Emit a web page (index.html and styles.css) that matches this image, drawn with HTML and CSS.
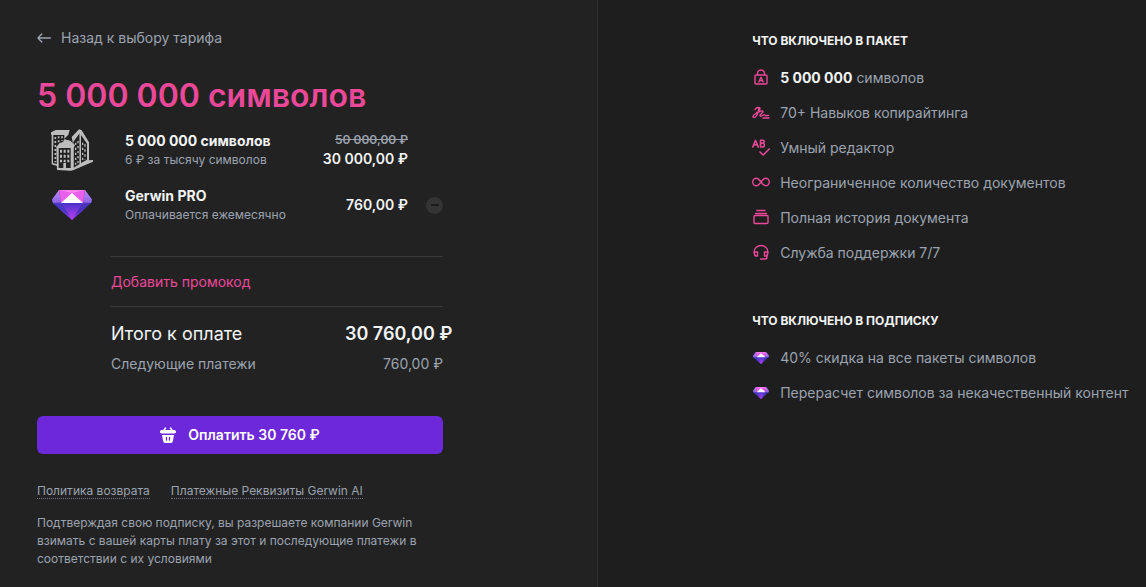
FILE: index.html
```html
<!doctype html>
<html lang="ru">
<head>
  <meta charset="utf-8">
  <meta name="viewport" content="width=device-width,initial-scale=1">
  <title>Оплата тарифа</title>
  <link rel="stylesheet" href="styles.css">
</head>
<body>

<!-- общий алмаз для подписки -->
<svg class="defs" aria-hidden="true">
  <linearGradient id="gemLow" x1="0" y1="0" x2="0" y2="1">
    <stop offset="0" stop-color="#3d35c8"/><stop offset="1" stop-color="#c93df5"/>
  </linearGradient>
  <linearGradient id="gemSide" x1="0" y1="0" x2="0" y2="1">
    <stop offset="0" stop-color="#bd8cfa"/><stop offset="1" stop-color="#8b62e6"/>
  </linearGradient>
  <symbol id="gem" viewBox="0 0 40 30">
    <path fill="#4b32bd" d="M0 11 2 14l18 16 18-16 2-3z"/>
    <path fill="url(#gemLow)" d="M9 12h22L20 30z"/>
    <path fill="#4a36c4" d="M0 10l9 2 11 18L2 14z"/>
    <path fill="url(#gemLow)" d="M5 17 20 30 35 17 20 27z" opacity=".6"/>
    <path fill="url(#gemSide)" d="M7 0 0 9.500 1 13l8-.500L7 0zM33 0l7 9.500-1 3.500-8-.500L33 0z"/>
    <path fill="#f56af2" d="M7 0h26l-2 12.500H9z"/>
    <path fill="#ff85ee" d="M7 0h26L20 3z"/>
    <path fill="#d94fe8" d="M7 0 9 12.500 20 3zM33 0l-2 12.500L20 3z" opacity=".4"/>
    <path fill="#fff" d="M20 3 9 13h22z"/>
  </symbol>
</svg>

<div class="page">
  <main class="order">
    <div class="inner">
      <a class="back" href="#">
        <svg width="14" height="10" viewBox="0 0 14 10" fill="none" stroke="currentColor" stroke-width="1.400" stroke-linecap="round" stroke-linejoin="round"><path d="M13.300 5H1M4.800 1 1 5l3.800 4"/></svg>
        Назад к выбору тарифа
      </a>

      <h1>5 000 000 символов</h1>

      <div class="item">
        <svg class="pic" width="42" height="42" viewBox="6 6 126 126" aria-hidden="true">
          <!-- левая башня -->
          <path fill="#bdbdbd" d="M6 16 20 9h42l-4 14-12 12-6 8H28L12 58v50l14 4v6L8 112V24l-2-2z"/>
          <path fill="#222" d="M13 24h33v16L26 54v56l-13-3z"/>
          <path fill="none" stroke="#bdbdbd" stroke-width="5" stroke-dasharray="6 6" d="M19 30v76M29 28v22M39 28v14"/>
          <!-- правый дом -->
          <path fill="#bdbdbd" d="M68 30 90 7l8 3 22 36v54l12-1v5L72 130V50z"/>
          <path fill="#222" d="M73 44 92 19v92l-19 12zM96 24l18 26v48l-18 10zM60 28l8-7-2 10-6 5z"/>
          <path stroke="#bdbdbd" stroke-width="4" d="M94 17v94"/>
          <path fill="none" stroke="#bdbdbd" stroke-width="4" stroke-dasharray="7 8" d="M80 47v66M87 42v66M101 47v54M108 52v46"/>
          <!-- средний дом -->
          <path fill="#bdbdbd" d="M22 60 32 48l10-3 4-8 18 4 14 14-4 8v66l-8 2-42-2z"/>
          <path fill="#222" d="M29 63h36v60H29z"/>
          <path fill="none" stroke="#bdbdbd" stroke-width="6" stroke-dasharray="9 6" d="M36 68v38M47 68v38M58 68v38"/>
          <path fill="#bdbdbd" d="M43 108h8v18h-8z"/>
        </svg>
        <div class="info">
          <div class="name">5 000 000 символов</div>
          <div class="note">6 ₽ за тысячу символов</div>
        </div>
        <div class="price">
          <s>50 000,00 ₽</s>
          <b>30 000,00 ₽</b>
        </div>
      </div>

      <div class="item">
        <svg class="pic" width="40" height="30" aria-hidden="true"><use href="#gem"/></svg>
        <div class="info">
          <div class="name">Gerwin PRO</div>
          <div class="note">Оплачивается ежемесячно</div>
        </div>
        <div class="price"><b>760,00 ₽</b></div>
        <button class="remove" type="button" aria-label="Убрать">
          <svg width="8" height="2" viewBox="0 0 8 2"><path fill="#1c1c1c" d="M0 0h8v2H0z"/></svg>
        </button>
      </div>

      <div class="summary">
        <div class="promo"><a href="#">Добавить промокод</a></div>
        <div class="sum total"><span>Итого к оплате</span><b>30 760,00 ₽</b></div>
        <div class="sum next"><span>Следующие платежи</span><span>760,00 ₽</span></div>
      </div>

      <button class="pay" type="submit">
        <svg width="16" height="16" viewBox="0 0 16 16" aria-hidden="true">
          <path fill="none" stroke="#fff" stroke-width="1.500" stroke-linecap="round" d="M5.500 1 3.500 4M10.500 1l2 3"/>
          <path fill="#fff" d="M2 3h12a1.500 1.500 0 0 1 .5 3.500h-13A1.500 1.500 0 0 1 2 3zM2 8h12l-1.200 6.300A2 2 0 0 1 11 16H5a2 2 0 0 1-1.800-1.700z"/>
          <path stroke="#6d28d9" stroke-width="1.300" stroke-linecap="round" d="M6.500 10.500v2.500M9.500 10.500v2.500"/>
        </svg>
        Оплатить 30 760 ₽
      </button>

      <div class="links">
        <a href="#">Политика возврата</a>
        <a href="#">Платежные Реквизиты Gerwin AI</a>
      </div>
      <p class="legal">Подтверждая свою подписку, вы разрешаете компании Gerwin взимать с вашей карты плату за этот и последующие платежи в соответствии с их условиями</p>
    </div>
  </main>

  <aside class="included">
    <h2>Что включено в пакет</h2>
    <ul>
      <li>
        <svg viewBox="0 0 18 18"><path d="M5.500 6V4.500a3.500 3.500 0 0 1 7 0V6M4 6h10q1 0 1 1v7q0 1-1 1H4q-1 0-1-1V7q0-1 1-1zM6.800 13 9 8.300l2.200 4.700M7.600 11.600h2.800"/></svg>
        <span><b>5 000 000</b> символов</span>
      </li>
      <li>
        <svg viewBox="0 0 18 18"><path d="M3 5.500C4 3.500 8 2.500 8 4.500S5.500 8.500 2 11c-2 1.500-.5 3.500 1.500 2 2-2 3-5.500 3.500-9M4.500 9.500C7 7.500 11 6 11 7.500s-3 2.500-3 4 2 .5 3.500-.5 1.500 1 3 .8M11 14h6M15 11.500h1.500"/></svg>
        <span>70+ Навыков копирайтинга</span>
      </li>
      <li>
        <svg viewBox="0 0 18 18"><path stroke-width="1.600" d="M.8 8 3.500 1.300 6.200 8M1.800 5.800h3.400M8.500 1.300V8H11a1.900 1.900 0 0 0 0-3.700H8.500M8.500 1.300h2.200a1.500 1.500 0 0 1 0 3M8 13l3.200 3 6-6"/></svg>
        <span>Умный редактор</span>
      </li>
      <li>
        <svg viewBox="0 0 18 18"><path d="M9 8C7 5.200 6 4.200 4.500 4.200a3.800 3.800 0 0 0 0 7.600C6 11.800 7 10.800 9 8s3-3.800 4.500-3.800a3.800 3.800 0 0 1 0 7.600C12 11.800 11 10.800 9 8z"/></svg>
        <span>Неограниченное количество документов</span>
      </li>
      <li>
        <svg viewBox="0 0 18 18"><path d="M5 1.500h8M3.500 4.500h11M3 6.500h12q1 0 1 1v6q0 1-1 1H3q-1 0-1-1v-6q0-1 1-1z"/></svg>
        <span>Полная история документа</span>
      </li>
      <li>
        <svg viewBox="0 0 18 18"><path d="M3.500 11.500Q2 10.500 2 8a7 6.500 0 0 1 14 0q0 2.500-1.500 3.500M3 8h2.500v4H4q-1.500 0-1.500-2M15 8h-2.500v4H14q1.500 0 1.500-2M15 11.500V13q0 2-2 2H8.500"/></svg>
        <span>Служба поддержки 7/7</span>
      </li>
    </ul>

    <h2>Что включено в подписку</h2>
    <ul>
      <li><svg class="gem" aria-hidden="true"><use href="#gem"/></svg><span>40% скидка на все пакеты символов</span></li>
      <li><svg class="gem" aria-hidden="true"><use href="#gem"/></svg><span>Перерасчет символов за некачественный контент</span></li>
    </ul>
  </aside>
</div>

</body>
</html>
```
FILE: styles.css
```css
:root{
  --bg:#1e1e1e; --panel:#222222; --line:#3a3a3a;
  --text:#f3f4f6; --muted:#9ca3af;
  --pink:#ec4899; --btn:#6d28d9;
}

*{box-sizing:border-box}
body{
  margin:0;
  font-family:Inter,"Liberation Sans",sans-serif;
  font-size:14px;
  line-height:20px;
  background:var(--bg);
  color:var(--muted);
}
a{color:inherit;text-decoration:none}
button{font:inherit;border:none;cursor:pointer}
.defs{position:absolute;width:0;height:0}

.page{display:flex;min-height:100vh}

/* ===== Заказ ===== */
.order{
  flex:0 0 52.2%;
  padding:28px 36px 16px 37px;
  background:var(--panel);
  border-right:1px solid #303030;
}
.inner{max-width:406px}
.back{display:flex;align-items:center;gap:10px}
h1{
  margin:28px 0 13px;
  font-size:32px;
  line-height:40px;
  font-weight:600;
  color:var(--pink);
}

.item{
  display:grid;
  grid-template-columns:70px 1fr auto 35px;
  align-items:center;
  height:38px;
  margin-bottom:19px;
}
.pic{justify-self:center}
.info{padding-left:18px}
.name{font-weight:700;color:var(--text)}
.note{font-size:12px;line-height:18px}
.price{display:flex;flex-direction:column;text-align:right}
.price s{font-size:12px;line-height:18px;font-weight:600}
.price b{font-weight:600;color:var(--text)}
.remove{
  display:flex;
  align-items:center;
  justify-content:center;
  justify-self:end;
  width:17px;
  height:17px;
  padding:0;
  border-radius:50%;
  background:#343434;
}

.summary{margin:32px 0 42px 74px}
.promo{
  padding:15px 0 14px;
  margin-bottom:17px;
  border-top:1px solid var(--line);
  border-bottom:1px solid var(--line);
  color:var(--pink);
}
.sum{display:grid;grid-template-columns:1fr 98px;white-space:nowrap}
.total{font-size:18px;margin-bottom:10px;color:var(--text)}
.total b{font-weight:600}
.next span:last-child{text-align:right}

.pay{
  display:flex;
  align-items:center;
  justify-content:center;
  gap:12px;
  width:100%;
  height:38px;
  border-radius:6px;
  background:var(--btn);
  color:#fff;
  font-weight:600;
}

.links{display:flex;gap:21px;margin-top:29px;font-size:12px;line-height:15px}
.links a{border-bottom:1px dotted #6b7280}
.legal{margin:15px 0 0;font-size:12px;line-height:18px}

/* ===== Что включено ===== */
.included{flex:1;padding:31px 0 31px 154px}
h2{
  margin:0 0 17px;
  font-size:12px;
  line-height:20px;
  font-weight:700;
  text-transform:uppercase;
  color:var(--text);
}
ul{
  display:grid;
  gap:15px;
  margin:0 0 48px;
  padding:0;
  list-style:none;
}
li{display:flex;align-items:center;gap:10px;white-space:nowrap}
li b{font-weight:700;color:var(--text)}
li svg{
  width:18px;
  height:18px;
  fill:none;
  stroke:var(--pink);
  stroke-width:1.4;
  stroke-linecap:round;
  stroke-linejoin:round;
}
li .gem{height:12px;stroke:none}
```
